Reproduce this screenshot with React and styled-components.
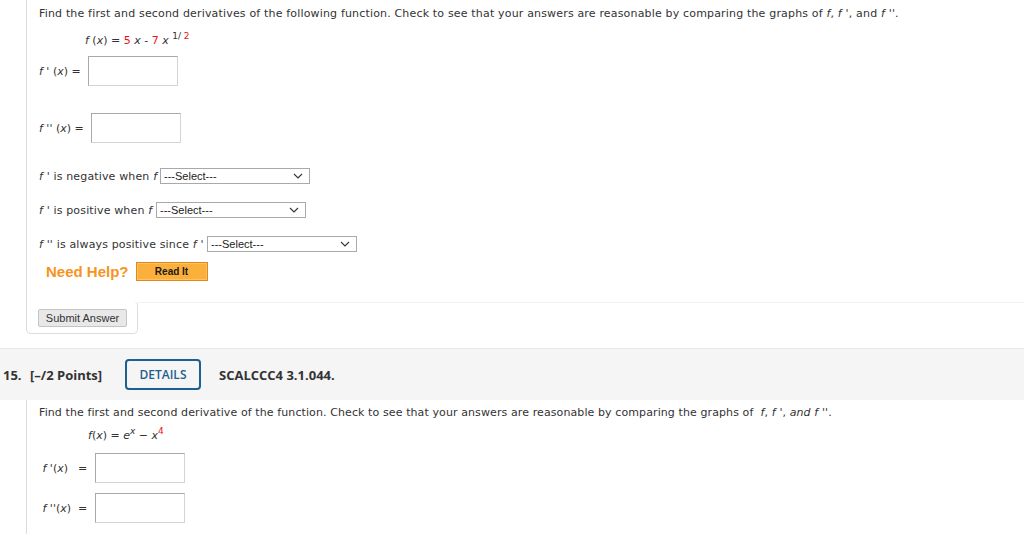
import React from 'react';
import styled, { createGlobalStyle } from 'styled-components';

const Global = createGlobalStyle`
  html, body { margin: 0; padding: 0; background: #fff; }
  body { font-family: "DejaVu Sans", Verdana, sans-serif; font-size: 11px; color: #333; }
`;

const Page = styled.div`
  width: 1024px;
  height: 534px;
  overflow: hidden;
`;

const QuestionBody = styled.div`
  margin-left: 26px;
  border-left: 1px solid #dcdcdc;
  padding: ${p => p.$pad || '7px 0 0 12px'};
  height: ${p => p.$height || 'auto'};
  box-sizing: border-box;
`;

const Prompt = styled.div`
  height: 14px;
  line-height: 14px;
  font-size: 11px;
  white-space: nowrap;
  letter-spacing: ${p => p.$ls || 0.1}px;
`;

const Formula = styled.div`
  height: 14px;
  line-height: 14px;
  margin-top: ${p => p.$mt || 10}px;
  padding-left: ${p => p.$indent || 46}px;
  white-space: nowrap;
`;

const I = styled.i`
  font-style: italic;
`;

const Red = styled.span`
  color: #f01010;
`;

const Sup = styled.sup`
  font-size: 9px;
  line-height: 0;
  vertical-align: 5px;
`;

const AnswerRow = styled.div`
  display: flex;
  align-items: center;
  margin-top: ${p => p.$mt}px;
  height: 30px;
`;

const Label = styled.span`
  width: ${p => p.$w}px;
  white-space: nowrap;
`;

const Eq = styled.span`
  width: ${p => p.$w}px;
`;

const AnswerBox = styled.div`
  width: 88px;
  height: 28px;
  border: 1px solid #a9a9a9;
  border-color: #a9a9a9 #d4d4d4 #d4d4d4 #a9a9a9;
  background: #fff;
`;

const SelectRow = styled.div`
  display: flex;
  align-items: center;
  height: 16px;
  margin-top: ${p => p.$mt}px;
`;

const SelectText = styled.span`
  width: ${p => p.$w}px;
  white-space: nowrap;
  letter-spacing: 0.15px;
`;

const FakeSelect = styled.div`
  box-sizing: border-box;
  width: 150px;
  height: 16px;
  border: 1px solid #a9a9a9;
  display: flex;
  align-items: center;
  justify-content: space-between;
  padding: 0 6px 0 3px;
  font-family: "Liberation Sans", Arial, sans-serif;
  font-size: 11px;
  color: #222;
`;

const HelpRow = styled.div`
  display: flex;
  align-items: center;
  height: 19px;
  margin-top: 10px;
  padding-left: 7px;
`;

const NeedHelp = styled.span`
  font-family: "Liberation Sans", Arial, sans-serif;
  font-weight: bold;
  font-size: 15px;
  color: #f7941d;
  margin-right: 7px;
`;

const ReadIt = styled.button`
  width: 72px;
  height: 19px;
  padding: 0;
  background: #fbb03b;
  border: 1px solid #e2851c;
  box-shadow: inset 0 0 0 1px #fcc563;
  font-family: "Liberation Sans", Arial, sans-serif;
  font-weight: bold;
  font-size: 10px;
  color: #1a1a1a;
`;

const SubmitRow = styled.div`
  display: flex;
  margin-left: 26px;
`;

const SubmitTab = styled.div`
  width: 99px;
  padding: 7px 0 6px 11px;
  border: 1px solid #dcdcdc;
  border-top: none;
  border-radius: 0 4px 5px 5px;
`;

const Filler = styled.div`
  flex: 1;
  border-top: 1px solid #f1f1f1;
`;

const SubmitButton = styled.button`
  width: 89px;
  height: 18px;
  padding: 0;
  background: #e8e8e8;
  border: 1px solid #c4c4c4;
  border-radius: 2px;
  font-family: "Liberation Sans", Arial, sans-serif;
  font-size: 11px;
  color: #333;
`;

const Band = styled.div`
  margin-top: 14px;
  height: 51px;
  background: #f5f5f5;
  border-top: 1px solid #e9e9e9;
  display: flex;
  align-items: center;
  font-family: "Open Sans", sans-serif;
  font-weight: bold;
  font-size: 13px;
  color: #333;
  padding-left: 3px;
`;

const Num = styled.span`
  width: 27px;
`;

const Points = styled.span`
  width: 95px;
`;

const DetailsButton = styled.div`
  width: 72px;
  height: 27px;
  border: 2px solid #1d5f8f;
  border-radius: 4px;
  display: flex;
  align-items: center;
  justify-content: center;
  font-family: "Open Sans", sans-serif;
  font-weight: 600;
  font-size: 12px;
  color: #1d5f8f;
  margin-right: 18px;
`;

const Chevron = () => (
  <svg width="10" height="6" viewBox="0 0 10 6">
    <path d="M1 1l4 4 4-4" fill="none" stroke="#333" strokeWidth="1.1" />
  </svg>
);

const Select = () => (
  <FakeSelect>
    <span>---Select---</span>
    <Chevron />
  </FakeSelect>
);

export default function App() {
  return (
    <Page>
      <Global />
      <QuestionBody $height="302px">
        <Prompt $ls={0.17}>
          Find the first and second derivatives of the following function. Check to see that your answers are reasonable by comparing the graphs of <I>f</I>, <I>f</I> ', and <I>f</I> ''.
        </Prompt>
        <Formula $mt={13} $indent={46}>
          <I>f</I> (<I>x</I>) = <Red>5</Red> <I>x</I> - <Red>7</Red> <I>x</I> <Sup>1/ <Red>2</Red></Sup>
        </Formula>
        <AnswerRow $mt={8}>
          <Label $w={49}><I>f</I> ' (<I>x</I>) =</Label>
          <AnswerBox />
        </AnswerRow>
        <AnswerRow $mt={27}>
          <Label $w={52}><I>f</I> '' (<I>x</I>) =</Label>
          <AnswerBox />
        </AnswerRow>
        <SelectRow $mt={25}>
          <SelectText $w={121}><I>f</I> ' is negative when <I>f</I></SelectText>
          <Select />
        </SelectRow>
        <SelectRow $mt={18}>
          <SelectText $w={117}><I>f</I> ' is positive when <I>f</I></SelectText>
          <Select />
        </SelectRow>
        <SelectRow $mt={18}>
          <SelectText $w={168}><I>f</I> '' is always positive since <I>f</I> '</SelectText>
          <Select />
        </SelectRow>
        <HelpRow>
          <NeedHelp>Need Help?</NeedHelp>
          <ReadIt>Read It</ReadIt>
        </HelpRow>
      </QuestionBody>
      <SubmitRow>
        <SubmitTab>
          <SubmitButton>Submit Answer</SubmitButton>
        </SubmitTab>
        <Filler />
      </SubmitRow>
      <Band>
        <Num>15.</Num>
        <Points>[–/2 Points]</Points>
        <DetailsButton>DETAILS</DetailsButton>
        <span>SCALCCC4 3.1.044.</span>
      </Band>
      <QuestionBody $pad="6px 0 0 12px" $height="200px">
        <Prompt>
          Find the first and second derivative of the function. Check to see that your answers are reasonable by comparing the graphs of&nbsp; <I>f</I>, <I>f</I> ', <I>and f</I> ''.
        </Prompt>
        <Formula $mt={9} $indent={49}>
          <I>f</I>(<I>x</I>) = <I>e</I><Sup><I>x</I></Sup> − <I>x</I><Sup><Red>4</Red></Sup>
        </Formula>
        <AnswerRow $mt={10}>
          <Label $w={39}>&nbsp;<I>f</I> '(<I>x</I>)</Label>
          <Eq $w={17}>=</Eq>
          <AnswerBox />
        </AnswerRow>
        <AnswerRow $mt={10}>
          <Label $w={39}>&nbsp;<I>f</I> ''(<I>x</I>)</Label>
          <Eq $w={17}>=</Eq>
          <AnswerBox />
        </AnswerRow>
      </QuestionBody>
    </Page>
  );
}
